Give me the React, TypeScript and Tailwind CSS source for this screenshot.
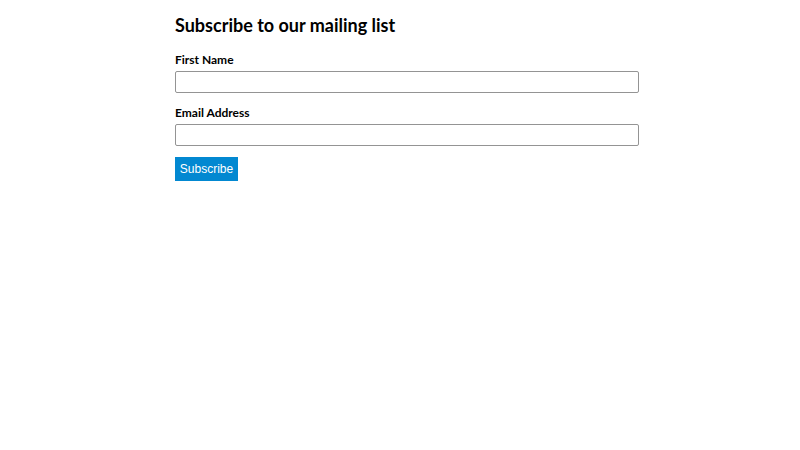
export default function App() {
  return (
    <div className="min-h-[450px] bg-white pl-[175px] pt-[13px]" style={{ fontFamily: 'Lato, "Noto Sans", sans-serif' }}>
      <form className="w-[464px]" onSubmit={(e) => e.preventDefault()}>
        <h1 className="text-[18px] font-bold leading-[24px] text-black">Subscribe to our mailing list</h1>

        <label className="mt-[15px] block text-[12px] font-bold leading-[16px] text-black">First Name</label>
        <input type="text" className="mt-[3px] block h-[22px] w-full rounded-[2px] border border-[#949494] bg-white px-1 text-[12px] outline-none" />

        <label className="mt-[12px] block text-[12px] font-bold leading-[16px] text-black">Email Address</label>
        <input type="email" className="mt-[3px] block h-[22px] w-full rounded-[2px] border border-[#949494] bg-white px-1 text-[12px] outline-none" />

        <button
          type="submit"
          className="mt-[11px] block h-[24px] w-[63px] bg-[#0288d1] text-[12px] leading-[24px] text-white"
          style={{ fontFamily: '"Liberation Sans", Arial, sans-serif' }}
        >
          Subscribe
        </button>
      </form>
    </div>
  );
}
